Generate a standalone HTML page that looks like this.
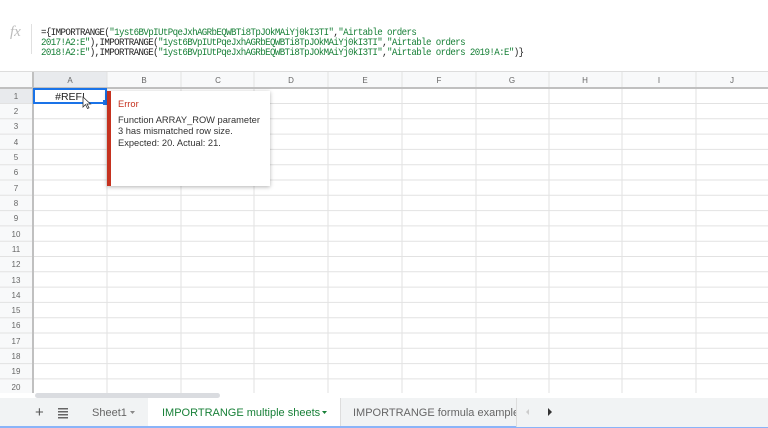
<!DOCTYPE html>
<html><head><style>
*{margin:0;padding:0;box-sizing:border-box}
body{width:768px;height:428px;overflow:hidden;background:#fff;font-family:"Liberation Sans",sans-serif;position:relative}
.fx{position:absolute;left:10px;top:24px;font:italic 15px "Liberation Serif",serif;color:#bbb}
.fsep{position:absolute;left:31px;top:24px;width:1px;height:30px;background:#e0e0e0}
.formula{position:absolute;left:41px;top:29px;font:10.5px/9.8px "Liberation Mono",monospace;color:#222;white-space:pre;letter-spacing:-0.7px;transform:scaleX(0.87);transform-origin:0 0}
.g{color:#188038}
.abs{position:absolute}
</style></head><body>
<div class="fx">fx</div><div class="fsep"></div>
<div class="formula">={IMPORTRANGE(<span class="g">"1yst6BVpIUtPqeJxhAGRbEQWBTi8TpJOkMAiYj0kI3TI"</span>,<span class="g">"Airtable orders</span>
<span class="g">2017!A2:E"</span>),IMPORTRANGE(<span class="g">"1yst6BVpIUtPqeJxhAGRbEQWBTi8TpJOkMAiYj0kI3TI"</span>,<span class="g">"Airtable orders</span>
<span class="g">2018!A2:E"</span>),IMPORTRANGE(<span class="g">"1yst6BVpIUtPqeJxhAGRbEQWBTi8TpJOkMAiYj0kI3TI"</span>,<span class="g">"Airtable orders 2019!A:E"</span>)}</div>
<svg class="abs" style="left:0;top:0" width="768" height="428" font-family="Liberation Sans" font-size="8" fill="#666">
<rect x="0" y="72" width="768" height="16" fill="#f8f9fa"/>
<rect x="0" y="72" width="33" height="321" fill="#f8f9fa"/>
<rect x="33" y="72" width="74" height="16" fill="#e8eaed"/>
<rect x="0" y="88" width="33" height="16" fill="#e8eaed"/>
<line x1="0" y1="71.5" x2="768" y2="71.5" stroke="#ddd"/>
<g stroke="#e2e2e2">
<line x1="107" y1="72" x2="107" y2="393"/><line x1="181" y1="72" x2="181" y2="393"/><line x1="254" y1="72" x2="254" y2="393"/><line x1="328" y1="72" x2="328" y2="393"/><line x1="402" y1="72" x2="402" y2="393"/><line x1="476" y1="72" x2="476" y2="393"/><line x1="549" y1="72" x2="549" y2="393"/><line x1="622" y1="72" x2="622" y2="393"/><line x1="696" y1="72" x2="696" y2="393"/>
<line x1="0" y1="103.5" x2="768" y2="103.5"/><line x1="0" y1="118.8" x2="768" y2="118.8"/><line x1="0" y1="134.1" x2="768" y2="134.1"/><line x1="0" y1="149.4" x2="768" y2="149.4"/><line x1="0" y1="164.7" x2="768" y2="164.7"/><line x1="0" y1="180" x2="768" y2="180"/><line x1="0" y1="195.3" x2="768" y2="195.3"/><line x1="0" y1="210.6" x2="768" y2="210.6"/><line x1="0" y1="225.9" x2="768" y2="225.9"/><line x1="0" y1="241.2" x2="768" y2="241.2"/><line x1="0" y1="256.5" x2="768" y2="256.5"/><line x1="0" y1="271.8" x2="768" y2="271.8"/><line x1="0" y1="287.1" x2="768" y2="287.1"/><line x1="0" y1="302.4" x2="768" y2="302.4"/><line x1="0" y1="317.7" x2="768" y2="317.7"/><line x1="0" y1="333" x2="768" y2="333"/><line x1="0" y1="348.3" x2="768" y2="348.3"/><line x1="0" y1="363.6" x2="768" y2="363.6"/><line x1="0" y1="378.9" x2="768" y2="378.9"/>
</g>
<line x1="0" y1="88" x2="768" y2="88" stroke="#c0c0c0" stroke-width="2"/>
<line x1="33" y1="72" x2="33" y2="393" stroke="#c0c0c0" stroke-width="2"/>
<g text-anchor="middle"><text x="70" y="83">A</text><text x="144" y="83">B</text><text x="218" y="83">C</text><text x="291" y="83">D</text><text x="365" y="83">E</text><text x="439" y="83">F</text><text x="512" y="83">G</text><text x="585" y="83">H</text><text x="659" y="83">I</text><text x="732" y="83">J</text>
<text x="16" y="99">1</text><text x="16" y="114">2</text><text x="16" y="129">3</text><text x="16" y="145">4</text><text x="16" y="160">5</text><text x="16" y="175">6</text><text x="16" y="191">7</text><text x="16" y="206">8</text><text x="16" y="221">9</text><text x="16" y="237">10</text><text x="16" y="252">11</text><text x="16" y="267">12</text><text x="16" y="283">13</text><text x="16" y="298">14</text><text x="16" y="313">15</text><text x="16" y="328">16</text><text x="16" y="344">17</text><text x="16" y="359">18</text><text x="16" y="374">19</text><text x="16" y="390">20</text></g>
<rect x="34" y="89" width="72" height="14" fill="none" stroke="#1a73e8" stroke-width="2"/>
<rect x="103" y="100" width="5" height="5" fill="#1a73e8"/>
<text x="70" y="100" text-anchor="middle" font-size="10.5" fill="#222">#REF!</text>
<path d="M83 97v10l2.5-2.5 2 4 1.5-.7-2-3.8h3.5z" fill="#fff" stroke="#333" stroke-width=".8"/>
<rect x="0" y="393" width="768" height="5" fill="#fff"/>
<rect x="35" y="393" width="185" height="5" rx="2.5" fill="#dadce0"/>
<rect x="0" y="398" width="768" height="30" fill="#f1f3f4"/>
<rect x="148" y="398" width="192" height="30" fill="#fff"/>
<rect x="340" y="398" width="1" height="30" fill="#ddd"/>
<line x1="0" y1="427" x2="768" y2="427" stroke="#8ab4f8" stroke-width="2"/>
<text x="35" y="417" font-size="15" fill="#555">+</text>
<g fill="#666"><rect x="58" y="408" width="10" height="1.5"/><rect x="58" y="411" width="10" height="1.5"/><rect x="58" y="414" width="10" height="1.5"/><rect x="58" y="417" width="10" height="1.5"/></g>
<text x="92" y="416" font-size="11" fill="#666">Sheet1</text><path d="M130 411l2.5 3 2.5-3z" fill="#888"/>
<text x="162" y="416" font-size="11" fill="#188038">IMPORTRANGE multiple sheets</text><path d="M322 411l2.5 3 2.5-3z" fill="#188038"/>
<text x="353" y="416" font-size="11" fill="#666">IMPORTRANGE formula example</text>
<rect x="516" y="398" width="252" height="29" fill="#f1f3f4"/>
<rect x="516" y="398" width="1" height="29" fill="#ddd"/>
<path d="M529 409l-3 3 3 3z" fill="#ccc"/><path d="M548 408l4 4-4 4z" fill="#333"/>
</svg>
<div class="abs" style="left:107px;top:91px;width:163px;height:95px;background:#fff;box-shadow:0 1px 4px rgba(0,0,0,.3);border-left:4px solid #c5321f;padding:8px 0 0 7px;font-size:9.3px;line-height:11.7px;color:#333;white-space:nowrap">
<div style="color:#c5321f;margin-bottom:4px">Error</div>
Function ARRAY_ROW parameter<br>3 has mismatched row size.<br>Expected: 20. Actual: 21.</div>
</body></html>
